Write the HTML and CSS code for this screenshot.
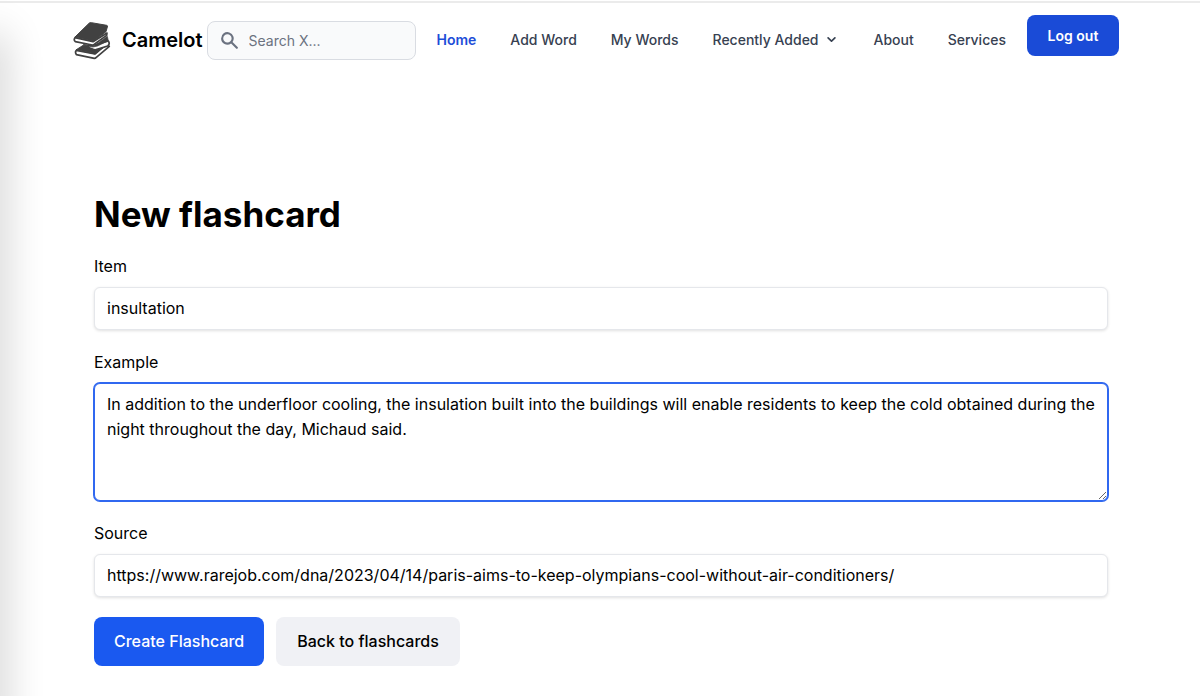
FILE: index.html
```html
<!DOCTYPE html>
<html lang="en">
<head>
<meta charset="utf-8">
<meta name="viewport" content="width=device-width, initial-scale=1">
<title>New flashcard - Camelot</title>
<link rel="stylesheet" href="styles.css">
</head>
<body class="page">
<header class="header">
  <a class="brand" href="#">
    <svg class="brand-logo" viewBox="0 0 114 117" aria-hidden="true">
      <g fill="#fff" stroke="#414141" stroke-width="5" stroke-linejoin="round" stroke-linecap="round">
        <path d="M10 88 Q5 92 10 101 L64 112 Q67 112 70 109 L109 76 L100 70 L66 99 Z"/>
        <path d="M10 86 L32 72 L64 84 L106 68 L66 98 Z" fill="#414141" stroke-width="3"/>
        <path d="M38 76 L64 86 Q68 87 72 85 L104 75 Q112 69 106 60 L72 70 Z"/>
        <path d="M32 70 L62 76 L103 46 L106 59 L74 75 L60 78 Z" fill="#414141" stroke-width="2"/>
        <path d="M6 50 Q1 57 7 62 L58 72 Q62 72 65 69 L101 43 L102 36 L60 62 Z"/>
        <path d="M6 48 L49 6 Q52 4 55 5 L101 13 Q105 14 103 18 L99 32 L66 58 Q62 61 58 60 Z" fill="#414141" stroke-width="3"/>
      </g>
    </svg>
    <span>Camelot</span>
  </a>
  <label class="search">
    <svg class="search-icon" viewBox="0 0 20 20" aria-hidden="true"><path fill="currentColor" fill-rule="evenodd" clip-rule="evenodd" d="M8 4a4 4 0 100 8 4 4 0 000-8zM2 8a6 6 0 1110.89 3.476l4.817 4.817a1 1 0 01-1.414 1.414l-4.816-4.816A6 6 0 012 8z"/></svg>
    <input class="search-input" type="search" placeholder="Search X..." aria-label="Search">
  </label>
  <nav class="nav">
    <a class="nav-link nav-link-active" href="#">Home</a>
    <a class="nav-link" href="#">Add Word</a>
    <a class="nav-link" href="#">My Words</a>
    <button class="nav-link nav-menu" type="button">Recently Added
      <svg class="chevron" viewBox="0 0 20 20" aria-hidden="true"><path fill="currentColor" fill-rule="evenodd" clip-rule="evenodd" d="M5.293 7.293a1 1 0 011.414 0L10 10.586l3.293-3.293a1 1 0 111.414 1.414l-4 4a1 1 0 01-1.414 0l-4-4a1 1 0 010-1.414z"/></svg>
    </button>
    <a class="nav-link" href="#">About</a>
    <a class="nav-link" href="#">Services</a>
  </nav>
  <button class="logout" type="button">Log out</button>
</header>
<main class="main">
  <h1 class="title">New flashcard</h1>
  <form class="form">
    <div class="field">
      <label for="item">Item</label>
      <input class="control" id="item" type="text" value="insultation">
    </div>
    <div class="field">
      <label for="example">Example</label>
      <textarea class="control control-area control-focused" id="example" rows="4">In addition to the underfloor cooling, the insulation built into the buildings will enable residents to keep the cold obtained during the night throughout the day, Michaud said.</textarea>
    </div>
    <div class="field">
      <label for="source">Source</label>
      <input class="control" id="source" type="text" value="https://www.rarejob.com/dna/2023/04/14/paris-aims-to-keep-olympians-cool-without-air-conditioners/">
    </div>
    <div class="actions">
      <button class="button button-primary" type="submit">Create Flashcard</button>
      <a class="button button-secondary" href="#">Back to flashcards</a>
    </div>
  </form>
</main>
</body>
</html>
```
FILE: styles.css
```css
*, *::before { box-sizing: border-box; }

.page {
  margin: 0;
  min-height: 100vh;
  background: #fff;
  color: #000;
  font-family: Inter, "Liberation Sans", sans-serif;
  font-size: 16px;
  line-height: 25px;
  overflow-x: hidden;
}

/* soft shade along the left window edge */
.page::before {
  content: "";
  position: fixed;
  top: 36px;
  bottom: -40px;
  left: -20px;
  width: 20px;
  box-shadow: 0 0 40px 2px rgba(0, 0, 0, 0.24);
  pointer-events: none;
}

input, textarea, button { font: inherit; color: inherit; }
a { color: inherit; text-decoration: none; }

.header {
  display: flex;
  align-items: flex-start;
  margin-top: 1px;
  border-top: 2px solid #ebebeb;
  padding: 12px 81px 0 73px;
}

.brand {
  display: flex;
  align-items: center;
  gap: 11px;
  height: 50px;
  font-size: 20px;
  font-weight: 600;
}
.brand-logo { width: 38px; height: 39px; }

.search {
  display: flex;
  align-items: center;
  gap: 9px;
  width: 209px;
  height: 39px;
  margin: 6px 0 0 4px;
  padding: 0 11px;
  border: 1px solid #d9dce2;
  border-radius: 8px;
  background: #f9fafb;
  color: #6b7280;
  font-size: 14px;
}
.search-icon { flex: none; width: 21px; height: 21px; }
.search-input {
  flex: 1;
  min-width: 0;
  padding: 0;
  border: 0;
  outline: 0;
  background: none;
  appearance: none;
}
.search-input::placeholder { color: #6b7280; opacity: 1; }

.nav {
  display: flex;
  flex: 1;
  align-items: center;
  justify-content: space-between;
  height: 49px;
  padding: 0 21px;
}
.nav-link {
  color: #374151;
  font-size: 14px;
  font-weight: 500;
  white-space: nowrap;
}
.nav-link-active { color: #1d4ed8; font-weight: 600; }
.nav-menu {
  display: flex;
  align-items: center;
  gap: 4px;
  padding: 0;
  border: 0;
  background: none;
}
.chevron { width: 17px; height: 17px; }

.logout {
  width: 92px;
  height: 41px;
  border: 0;
  border-radius: 8px;
  background: #1a4bd7;
  color: #fff;
  font-size: 14px;
  font-weight: 600;
}

.main { padding: 124px 92px 24px 94px; }
.title {
  margin: 0 0 15px;
  font-size: 35px;
  font-weight: 700;
  line-height: 50px;
}
.form { display: flex; flex-direction: column; gap: 20px; }
.field { display: flex; flex-direction: column; gap: 8px; }

.control {
  display: block;
  width: 100%;
  padding: 8px 12px;
  border: 1px solid #e5e7eb;
  border-radius: 6px;
  background: #fff;
  outline: 0;
  box-shadow: 0 1px 3px rgba(0, 0, 0, 0.12);
}
.control-area { padding-right: 4px; }
.control-focused {
  border-color: #3068f0;
  box-shadow: 0 0 0 1px #3068f0;
}

.actions { display: flex; gap: 12px; }
.button {
  padding: 12px 20px;
  border: 0;
  border-radius: 8px;
  font-weight: 500;
}
.button-primary { background: #1a59f0; color: #fff; }
.button-secondary { padding: 12px 21px; background: #f0f1f5; }
```
